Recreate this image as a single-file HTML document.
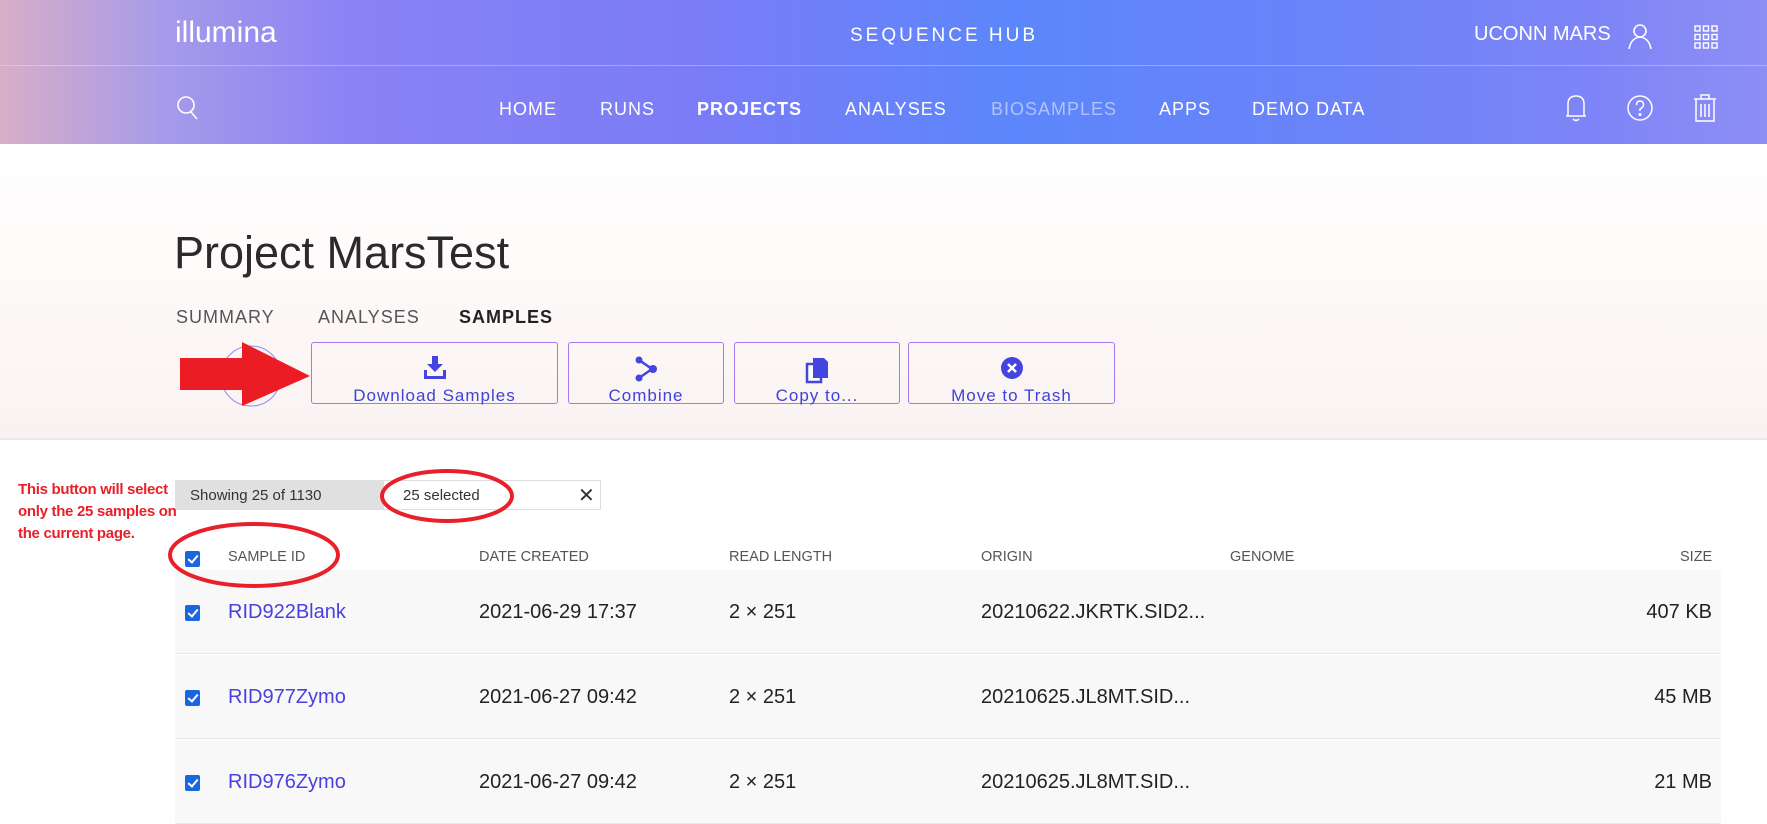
<!DOCTYPE html>
<html><head><meta charset="utf-8"><style>
*{margin:0;padding:0;box-sizing:border-box}
body{width:1767px;height:797px;overflow:hidden;background:#fff;font-family:"Liberation Sans",sans-serif;position:relative}
.a{position:absolute;white-space:nowrap}
#hdr{position:absolute;left:0;top:0;width:1767px;height:144px;background:linear-gradient(90deg,#d8aec8 0%,#a79be9 9%,#8a82f5 20%,#7a7cf7 40%,#5c86fb 57%,#6a83f9 75%,#7d84f7 90%,#8e8ff5 100%)}
#hdr .line{position:absolute;left:0;top:65px;width:100%;height:1px;background:rgba(255,255,255,.3)}
.nav{color:#fff;font-size:18px;letter-spacing:1px;top:99px}
#hero{position:absolute;left:0;top:144px;width:1767px;height:296px;background:linear-gradient(180deg,#fff 0%,#fdf9f8 50%,#faf2f2 100%);border-bottom:2px solid #ede7e6}
.btn{position:absolute;top:342px;height:62px;border:1px solid #a678ee;border-radius:3px;color:#3d43d8;font-size:17px;letter-spacing:1px;text-align:center}
.btn span{position:absolute;left:0;right:0;top:53px;line-height:0}
.btn svg{position:absolute;left:50%;top:13px;transform:translateX(-50%)}
.th{top:549px;font-size:14.5px;color:#555}
.row{position:absolute;left:175px;width:1546px;height:84px;background:#f8f8f8;border-bottom:1px solid #e8e8e8}
.cell{font-size:20px;color:#222}
.cb{position:absolute;width:15px;height:16px;background:#1a66e0;border-radius:2px}
.cb:after{content:"";position:absolute;left:5px;top:2px;width:4px;height:8px;border:solid #fff;border-width:0 2px 2px 0;transform:rotate(40deg)}
.ann{color:#e8202a;font-weight:bold;font-size:15px;letter-spacing:-0.3px;left:18px;z-index:3;font-family:"Liberation Sans Narrow","Liberation Sans",sans-serif}
</style></head><body>
<div id="hdr"><div class="line"></div>
<div class="a" style="left:175px;top:16px;font-size:30px;color:#fff">illumina</div>
<div class="a" style="left:850px;top:25px;font-size:19px;color:#fff;letter-spacing:3px">SEQUENCE HUB</div>
<div class="a" style="left:1474px;top:23px;font-size:20px;color:#fff">UCONN MARS</div>
<svg class="a" style="left:1626px;top:22px" width="28" height="28" viewBox="0 0 28 28" fill="none" stroke="#fff" stroke-width="1.6"><circle cx="14" cy="9" r="6"/><path d="M3 27 Q5 16 14 15 Q23 16 25 27"/></svg>
<svg class="a" style="left:1694px;top:25px" width="24" height="24" viewBox="0 0 24 24" fill="none" stroke="#fff" stroke-width="1.4"><rect x="1" y="1" width="5" height="5"/><rect x="9.5" y="1" width="5" height="5"/><rect x="18" y="1" width="5" height="5"/><rect x="1" y="9.5" width="5" height="5"/><rect x="9.5" y="9.5" width="5" height="5"/><rect x="18" y="9.5" width="5" height="5"/><rect x="1" y="18" width="5" height="5"/><rect x="9.5" y="18" width="5" height="5"/><rect x="18" y="18" width="5" height="5"/></svg>
<svg class="a" style="left:176px;top:95px" width="24" height="26" viewBox="0 0 24 26" fill="none" stroke="#fff" stroke-width="1.6"><circle cx="10" cy="10" r="8"/><path d="M15 17 L21 24"/></svg>
<div class="a nav" style="left:499px">HOME</div>
<div class="a nav" style="left:600px">RUNS</div>
<div class="a nav" style="left:697px;font-weight:bold">PROJECTS</div>
<div class="a nav" style="left:845px">ANALYSES</div>
<div class="a nav" style="left:991px;color:rgba(255,255,255,.5)">BIOSAMPLES</div>
<div class="a nav" style="left:1159px">APPS</div>
<div class="a nav" style="left:1252px">DEMO DATA</div>
<svg class="a" style="left:1564px;top:93px" width="24" height="30" viewBox="0 0 24 30" fill="none" stroke="#fff" stroke-width="1.5"><path d="M4 23 L4 11 Q4 3 12 3 Q20 3 20 11 L20 23 Z M2 23 H22 M9 26 Q12 29 15 26"/></svg>
<svg class="a" style="left:1626px;top:94px" width="28" height="28" viewBox="0 0 28 28" fill="none" stroke="#fff" stroke-width="1.5"><circle cx="14" cy="14" r="12"/><path d="M10.5 11 Q10.5 7 14 7 Q17.5 7 17.5 10.5 Q17.5 13 14 15 V17"/><circle cx="14" cy="20.5" r="0.8" fill="#fff"/></svg>
<svg class="a" style="left:1693px;top:93px" width="24" height="30" viewBox="0 0 24 30" fill="none" stroke="#fff" stroke-width="1.5"><path d="M1 6 H23 M8 6 V2 H16 V6 M3 6 V28 H21 V6 M8 11 V24 M12 11 V24 M16 11 V24"/></svg>
</div>
<div id="hero"></div>
<div class="a" style="left:174px;top:227px;font-size:45px;color:#2a2a2e">Project MarsTest</div>
<div class="a" style="left:176px;top:307px;font-size:18px;color:#555;letter-spacing:1px">SUMMARY</div>
<div class="a" style="left:318px;top:307px;font-size:18px;color:#555;letter-spacing:1px">ANALYSES</div>
<div class="a" style="left:459px;top:307px;font-size:18px;color:#222;letter-spacing:1px;font-weight:bold">SAMPLES</div>
<svg class="a" style="left:178px;top:340px" width="136" height="68" viewBox="0 0 136 68"><circle cx="73" cy="36" r="30" fill="none" stroke="#8c8cf0" stroke-width="1"/><path d="M2 18 H64 V2 L132 36 L64 66 V50 H2 Z" fill="#ec1c24"/></svg>
<div class="btn" style="left:311px;width:247px"><svg width="26" height="24" viewBox="0 0 26 24" fill="#4445e0"><path d="M10 0 H16 V8 H21 L13 16 L5 8 H10 Z M2 14 H5 V20 H21 V14 H24 V23 H2 Z"/></svg><span>Download Samples</span></div>
<div class="btn" style="left:568px;width:156px"><svg width="26" height="26" viewBox="0 0 26 26" fill="#4445e0" stroke="#4445e0" stroke-width="2.5"><path d="M6 4 L19 13 L6 22" fill="none"/><circle cx="6" cy="4" r="3.5" stroke="none"/><circle cx="20" cy="13" r="4" stroke="none"/><circle cx="6" cy="22" r="3.5" stroke="none"/></svg><span>Combine</span></div>
<div class="btn" style="left:734px;width:166px"><svg width="26" height="28" viewBox="0 0 26 28"><rect x="3" y="8" width="14" height="18" fill="#fff" stroke="#4445e0" stroke-width="2.5"/><path d="M9 2 H20 L24 6 V22 H9 Z" fill="#4445e0"/></svg><span>Copy to...</span></div>
<div class="btn" style="left:908px;width:207px"><svg width="24" height="24" viewBox="0 0 24 24"><circle cx="12" cy="12" r="11" fill="#4445e0"/><path d="M8 8 L16 16 M16 8 L8 16" stroke="#fff" stroke-width="2.6"/></svg><span>Move to Trash</span></div>

<div class="a ann" style="top:481px">This button will select</div>
<div class="a ann" style="top:503px">only the 25 samples on</div>
<div class="a ann" style="top:525px">the current page.</div>
<div class="a" style="left:175px;top:480px;width:208px;height:30px;background:#e0e0e0"></div>
<div class="a" style="left:383px;top:480px;width:218px;height:30px;border:1px solid #ddd;background:#fff"></div>
<div class="a" style="left:190px;top:487px;font-size:15px;color:#333">Showing 25 of 1130</div>
<div class="a" style="left:403px;top:487px;font-size:15px;color:#333">25 selected</div>
<div class="a" style="left:578px;top:483px;font-size:20px;color:#333">✕</div>
<svg class="a" style="left:160px;top:465px;z-index:2" width="370" height="130" viewBox="0 0 370 130" fill="none" stroke="#e8202a" stroke-width="4"><ellipse cx="287" cy="31" rx="65" ry="25"/><ellipse cx="94" cy="90" rx="84" ry="31"/></svg>
<div class="cb" style="left:185px;top:551px"></div>
<div class="a th" style="left:228px">SAMPLE ID</div>
<div class="a th" style="left:479px">DATE CREATED</div>
<div class="a th" style="left:729px">READ LENGTH</div>
<div class="a th" style="left:981px">ORIGIN</div>
<div class="a th" style="left:1230px">GENOME</div>
<div class="a th" style="left:1680px">SIZE</div>

<div class="row" style="top:570px"></div>
<div class="row" style="top:655px"></div>
<div class="row" style="top:740px"></div>
<div class="cb" style="left:185px;top:605px"></div>
<div class="cb" style="left:185px;top:690px"></div>
<div class="cb" style="left:185px;top:775px"></div>
<div class="a cell" style="left:228px;top:601px;color:#4a3fe0">RID922Blank</div>
<div class="a cell" style="left:479px;top:601px">2021-06-29 17:37</div>
<div class="a cell" style="left:729px;top:601px">2 × 251</div>
<div class="a cell" style="left:981px;top:601px">20210622.JKRTK.SID2...</div>
<div class="a cell" style="right:55px;top:601px">407 KB</div>
<div class="a cell" style="left:228px;top:686px;color:#4a3fe0">RID977Zymo</div>
<div class="a cell" style="left:479px;top:686px">2021-06-27 09:42</div>
<div class="a cell" style="left:729px;top:686px">2 × 251</div>
<div class="a cell" style="left:981px;top:686px">20210625.JL8MT.SID...</div>
<div class="a cell" style="right:55px;top:686px">45 MB</div>
<div class="a cell" style="left:228px;top:771px;color:#4a3fe0">RID976Zymo</div>
<div class="a cell" style="left:479px;top:771px">2021-06-27 09:42</div>
<div class="a cell" style="left:729px;top:771px">2 × 251</div>
<div class="a cell" style="left:981px;top:771px">20210625.JL8MT.SID...</div>
<div class="a cell" style="right:55px;top:771px">21 MB</div>
</body></html>
